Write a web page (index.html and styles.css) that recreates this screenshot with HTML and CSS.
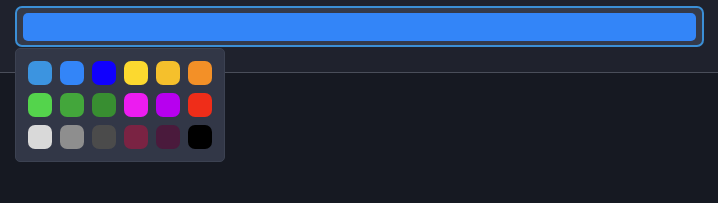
FILE: index.html
```html
<!DOCTYPE html>
<html>
<head>
<meta charset="utf-8">
<link rel="stylesheet" href="styles.css">
</head>
<body>
<div class="toolbar">
  <div class="picker">
    <div class="field"><div class="current"></div></div>
    <div class="palette">
      <span class="sw" style="background:#3c94e0"></span>
      <span class="sw" style="background:#3385f8"></span>
      <span class="sw" style="background:#1000fe"></span>
      <span class="sw" style="background:#fcd92f"></span>
      <span class="sw" style="background:#f5c02c"></span>
      <span class="sw" style="background:#f39027"></span>
      <span class="sw" style="background:#54d44c"></span>
      <span class="sw" style="background:#43a63b"></span>
      <span class="sw" style="background:#388e31"></span>
      <span class="sw" style="background:#ec1cf0"></span>
      <span class="sw" style="background:#b700ef"></span>
      <span class="sw" style="background:#ef2d19"></span>
      <span class="sw" style="background:#d9d9d9"></span>
      <span class="sw" style="background:#8e8e8e"></span>
      <span class="sw" style="background:#4b4b4b"></span>
      <span class="sw" style="background:#7a2343"></span>
      <span class="sw" style="background:#4a1a3c"></span>
      <span class="sw" style="background:#000000"></span>
    </div>
  </div>
</div>
<div class="content"></div>
</body>
</html>
```
FILE: styles.css
```css
html, body {
  margin: 0;
  padding: 0;
  background: #161922;
  font-family: "Liberation Sans", sans-serif;
}
body {
  min-height: 203px;
}
.toolbar {
  position: relative;
  z-index: 5;
  background: #1f222d;
  height: 73px;
  border-bottom: 1px solid #4a4e5a;
  box-sizing: border-box;
  padding: 6px 14px 0 15px;
  overflow: visible;
}
.picker {
  position: relative;
}
.field {
  height: 41px;
  box-sizing: border-box;
  border: 2px solid #3b8fd6;
  border-radius: 7px;
  background: #343a4a;
  padding: 5px 6px 4px 6px;
}
.current {
  height: 28px;
  border-radius: 5px;
  background: #3385f8;
}
.palette {
  position: absolute;
  left: 0;
  top: 42px;
  width: 210px;
  box-sizing: border-box;
  background: #323747;
  border: 1px solid #3c4252;
  border-radius: 5px;
  padding: 12px 12px 12px 12px;
  display: grid;
  grid-template-columns: repeat(6, 24px);
  grid-auto-rows: 24px;
  gap: 8px;
  z-index: 2;
}
.sw {
  width: 24px;
  height: 24px;
  border-radius: 7px;
  display: block;
}
.content {
  height: 130px;
}
```
